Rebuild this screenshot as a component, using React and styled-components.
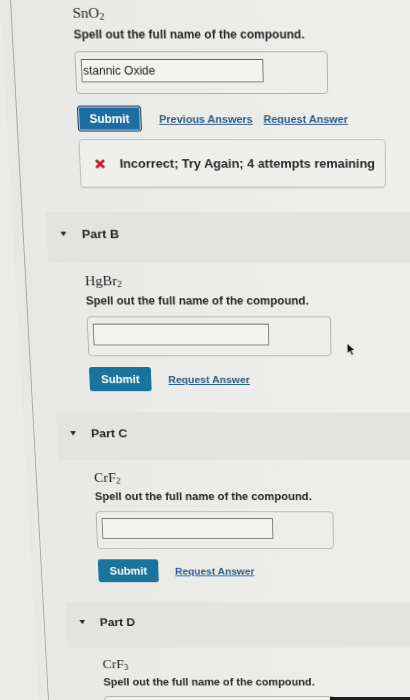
import React from "react";
import styled, { createGlobalStyle } from "styled-components";

const GlobalStyle = createGlobalStyle`
  html, body {
    margin: 0;
    padding: 0;
    width: 410px;
    height: 700px;
    overflow: hidden;
    background: #ebebe9;
  }
  #root {
    width: 410px;
    height: 700px;
    overflow: hidden;
    position: relative;
  }
`;

const Frame = styled.div`
  position: relative;
  width: 410px;
  height: 800px;
  transform-origin: 422px 0;
  transform: perspective(1000px) rotateX(-7.5deg);
  font-family: "Liberation Sans", Arial, sans-serif;
  color: #232323;
  background: linear-gradient(90deg, #e8e8e6 0%, #ebebe9 40%, #eeeeec 100%);
`;

const Panel = styled.div`
  margin-left: 10px;
  border-left: 1px solid #a9a9a7;
  min-height: 800px;
  padding-top: 3px;
  box-sizing: border-box;
`;

const Content = styled.div`
  padding-left: 61px;
`;

const Formula = styled.div`
  font-family: "Liberation Serif", "Times New Roman", serif;
  font-size: 15px;
  line-height: 20px;
  height: 20px;
  color: #262626;
  sub {
    font-size: 10px;
    line-height: 0;
    vertical-align: -2px;
  }
`;

const Prompt = styled.div`
  margin-top: 3px;
  font-weight: 700;
  font-size: 12px;
  line-height: 18px;
  color: #262626;
`;

const AnswerBox = styled.div`
  margin-top: 8px;
  width: 255px;
  height: 44px;
  box-sizing: border-box;
  border: 1px solid #b3b3b0;
  border-radius: 4px;
  padding: 7px 5px;
  background: #ededeb;
`;

const Input = styled.div`
  width: 184px;
  height: 24px;
  box-sizing: border-box;
  border: 1px solid #80807e;
  border-top-color: #626260;
  background: #f3f3f1;
  font-size: 12px;
  line-height: 22px;
  padding-left: 1px;
  color: #222;
`;

const Actions = styled.div`
  margin-top: 12px;
  height: 27px;
  display: flex;
  align-items: center;
`;

const SubmitButton = styled.button`
  width: 65px;
  height: 27px;
  box-sizing: border-box;
  margin: 0 18px 0 0;
  padding: 0;
  font-family: "Liberation Sans", Arial, sans-serif;
  font-weight: 700;
  font-size: 12px;
  color: #ffffff;
  background: ${(p) => (p.$focused ? "#1c6ea2" : "#19739c")};
  border: ${(p) => (p.$focused ? "1px solid #1b3852" : "none")};
  box-shadow: ${(p) => (p.$focused ? "inset 0 0 0 1px #b9d3e7" : "none")};
  border-radius: 3px;
`;

const LinkText = styled.span`
  margin-right: 11px;
  font-weight: 700;
  font-size: 11px;
  color: #2b5c87;
  text-decoration: underline;
`;

const Feedback = styled.div`
  margin-top: 8px;
  width: 313px;
  height: 51px;
  box-sizing: border-box;
  border: 1px solid #bdbdbb;
  border-radius: 4px;
  background: #efefed;
  box-shadow: 0 1px 1px rgba(0, 0, 0, 0.08);
  display: flex;
  align-items: center;
  gap: 14px;
  padding-left: 14px;
  font-weight: 700;
  font-size: 13px;
  color: #262626;
`;

const PartHeader = styled.div`
  margin: ${(p) => (p.$first ? "26px" : "0")} 0 0 24px;
  height: 54px;
  box-sizing: border-box;
  padding: 14px 0 0 14px;
  background: #e3e3e0;
  display: flex;
  align-items: flex-start;
`;

const HeaderRow = styled.div`
  height: 18px;
  display: flex;
  align-items: center;
  gap: 16px;
  font-weight: 700;
  font-size: 13px;
  color: #262626;
`;

const Caret = styled.span`
  width: 0;
  height: 0;
  border-left: 3.5px solid transparent;
  border-right: 3.5px solid transparent;
  border-top: 5px solid #2a2a2a;
`;

const PartBody = styled.div`
  padding: 10px 0 24px 61px;
`;

const Cursor = styled.svg`
  position: absolute;
  left: 343px;
  top: 362px;
`;

const Bezel = styled.div`
  position: absolute;
  right: 0;
  bottom: 0;
  width: 80px;
  height: 3px;
  background: #1e1e1e;
`;

function XIcon() {
  return (
    <svg width="12" height="12" viewBox="0 0 12 12">
      <path d="M2 2 L10 10 M10 2 L2 10" stroke="#c41e2a" strokeWidth="3" strokeLinecap="butt" />
    </svg>
  );
}

function Question({ formula, sub, value, focused, previous, showActions = true }) {
  return (
    <>
      <Formula>
        {formula}
        <sub>{sub}</sub>
      </Formula>
      <Prompt>Spell out the full name of the compound.</Prompt>
      <AnswerBox>
        <Input>{value}</Input>
      </AnswerBox>
      {showActions && (
        <Actions>
          <SubmitButton $focused={focused}>Submit</SubmitButton>
          {previous && <LinkText>Previous Answers</LinkText>}
          <LinkText>Request Answer</LinkText>
        </Actions>
      )}
    </>
  );
}

function Part({ label, first, children }) {
  return (
    <>
      <PartHeader $first={first}>
        <HeaderRow>
          <Caret />
          <span>{label}</span>
        </HeaderRow>
      </PartHeader>
      <PartBody>{children}</PartBody>
    </>
  );
}

export default function App() {
  return (
    <>
      <GlobalStyle />
      <Frame>
        <Panel>
          <Content>
            <Question formula="SnO" sub="2" value="stannic Oxide" focused previous />
            <Feedback>
              <XIcon />
              <span>Incorrect; Try Again; 4 attempts remaining</span>
            </Feedback>
          </Content>
          <Part label="Part B" first>
            <Question formula="HgBr" sub="2" />
          </Part>
          <Part label="Part C">
            <Question formula="CrF" sub="2" />
          </Part>
          <Part label="Part D">
            <Question formula="CrF" sub="3" showActions={false} />
          </Part>
        </Panel>
        <Cursor width="10" height="15" viewBox="0 0 10 15">
          <path d="M0.5 0.5 L0.5 12 L3.2 9.4 L5.4 14 L7.3 13.1 L5.2 8.6 L8.8 8.6 Z" fill="#111" stroke="#f4f4f4" strokeWidth="0.8" />
        </Cursor>
      </Frame>
      <Bezel />
    </>
  );
}
